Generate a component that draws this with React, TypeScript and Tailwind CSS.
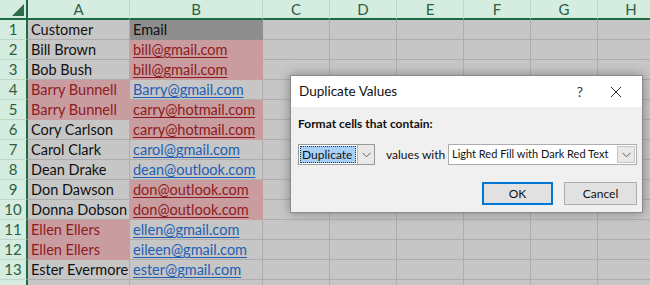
import React from "react";

type Cell = { text: string; pink?: boolean; link?: boolean };

const rows: [Cell, Cell][] = [
  [{ text: "Customer" }, { text: "Email" }],
  [{ text: "Bill Brown" }, { text: "bill@gmail.com", pink: true, link: true }],
  [{ text: "Bob Bush" }, { text: "bill@gmail.com", pink: true, link: true }],
  [{ text: "Barry Bunnell", pink: true }, { text: "Barry@gmail.com", link: true }],
  [{ text: "Barry Bunnell", pink: true }, { text: "carry@hotmail.com", pink: true, link: true }],
  [{ text: "Cory Carlson" }, { text: "carry@hotmail.com", pink: true, link: true }],
  [{ text: "Carol Clark" }, { text: "carol@gmail.com", link: true }],
  [{ text: "Dean Drake" }, { text: "dean@outlook.com", link: true }],
  [{ text: "Don Dawson" }, { text: "don@outlook.com", pink: true, link: true }],
  [{ text: "Donna Dobson" }, { text: "don@outlook.com", pink: true, link: true }],
  [{ text: "Ellen Ellers", pink: true }, { text: "ellen@gmail.com", link: true }],
  [{ text: "Ellen Ellers", pink: true }, { text: "eileen@gmail.com", link: true }],
  [{ text: "Ester Evermore" }, { text: "ester@gmail.com", link: true }],
  [{ text: "" }, { text: "" }],
];

const cols = ["A", "B", "C", "D", "E", "F", "G", "H"];
const gridCols = "grid grid-cols-[28px_102px_133px_67px_67px_67px_67px_67px_67px]";

function DataCell({ cell, header }: { cell: Cell; header?: boolean }) {
  let cls = "bg-[#c6c6c6] border-[#adadad] text-[#111]";
  if (header) cls = "bg-[#8d8d8d] border-[#8d8d8d] text-[#111]";
  if (cell.pink) cls = "bg-[#c99ca0] border-[#c99ca0] text-[#8e1b21]";
  if (cell.link && !cell.pink) cls = "bg-[#c6c6c6] border-[#adadad] text-[#1f5fb5]";
  return (
    <div className={`h-5 border-r border-b px-[3px] flex items-end overflow-hidden whitespace-nowrap text-[14.5px] leading-[19px] ${cls}`}>
      <span className={cell.link ? "underline underline-offset-2" : ""}>{cell.text}</span>
    </div>
  );
}

function Chevron() {
  return (
    <svg width="9" height="6" viewBox="0 0 9 6" fill="none">
      <path d="M0.5 0.8 L4.5 4.8 L8.5 0.8" stroke="#606060" strokeWidth="1" />
    </svg>
  );
}

function Dialog() {
  return (
    <div className="absolute left-[290px] top-[75px] w-[353px] h-[138px] bg-[#f0f0f0] border border-[#8a8a8a] shadow-[0_0_10px_rgba(0,0,0,0.35)] font-['Lato',sans-serif] text-[11.5px] text-[#111]">
      <div className="h-[31px] bg-white flex items-center pl-[8px]">
        <span className="text-[13.5px] flex-1">Duplicate Values</span>
        <span className="text-[14px] text-[#333] w-[24px] text-center">?</span>
        <span className="w-[48px] flex justify-center mr-[2px]">
          <svg width="12" height="12" viewBox="0 0 12 12">
            <path d="M1 1 L11 11 M11 1 L1 11" stroke="#333" strokeWidth="1" />
          </svg>
        </span>
      </div>
      <div className="px-[7px]">
        <div className="font-bold mt-[8px] h-[17px] leading-[17px] text-[12px]">Format cells that contain:</div>
        <div className="flex items-center mt-[12px] -mr-[2px]">
          <div className="w-[77px] h-[21px] bg-white border border-[#9a9a9a] flex items-stretch">
            <div className="flex-1 m-[1px] bg-[#a9d1f7] border border-dotted border-[#333] flex items-center pl-[1px] leading-none text-[12px]">
              Duplicate
            </div>
            <div className="w-[17px] bg-[#e8e8e8] border-l border-[#b8b8b8] flex items-center justify-center">
              <Chevron />
            </div>
          </div>
          <span className="ml-[11px] whitespace-nowrap text-[12px]">values with</span>
          <div className="ml-auto w-[189px] h-[21px] bg-white border border-[#adadad] flex items-stretch">
            <div className="flex-1 flex items-center pl-[3px] whitespace-nowrap overflow-hidden text-[11px]">Light Red Fill with Dark Red Text</div>
            <div className="w-[18px] m-[1px] bg-[#e8e8e8] border border-[#c4c4c4] flex items-center justify-center">
              <Chevron />
            </div>
          </div>
        </div>
        <div className="flex justify-end mt-[17px] gap-[11px] -mr-[2px] text-[12px]">
          <button className="w-[71px] h-[23px] bg-[#e1e1e1] border-2 border-[#0078d7] flex items-center justify-center">
            OK
          </button>
          <button className="w-[73px] h-[23px] bg-[#e1e1e1] border border-[#adadad] flex items-center justify-center">
            Cancel
          </button>
        </div>
      </div>
    </div>
  );
}

export default function App() {
  return (
    <div className="relative w-[650px] h-[285px] overflow-hidden bg-[#c6c6c6] font-['Lato',sans-serif]">
      <div className={`${gridCols} h-5`}>
        <div className="bg-[#d4ede0] border-b-2 border-r-2 border-[#1e6b41] relative">
          <svg className="absolute right-[2px] bottom-[2px]" width="12" height="12" viewBox="0 0 12 12">
            <polygon points="12,0 12,12 0,12" fill="#2e6b48" />
          </svg>
        </div>
        {cols.map((c) => (
          <div
            key={c}
            className="bg-[#d4ede0] border-b-2 border-b-[#1e6b41] border-r border-r-[#bcd7c6] text-center text-[15px] leading-[18px] text-[#2f5e45]"
          >
            {c}
          </div>
        ))}
      </div>
      {rows.map((r, i) => (
        <div key={i} className={gridCols}>
          <div className="h-5 bg-[#d4ede0] border-r-2 border-r-[#1e6b41] border-b border-b-[#bcd7c6] text-center text-[15px] leading-[19px] text-[#2f5e45]">
            {i < 13 ? i + 1 : ""}
          </div>
          <DataCell cell={r[0]} />
          <DataCell cell={r[1]} header={i === 0} />
          {[0, 1, 2, 3, 4, 5].map((k) => (
            <div key={k} className="h-5 bg-[#c6c6c6] border-r border-b border-[#adadad]" />
          ))}
        </div>
      ))}
      <Dialog />
    </div>
  );
}
